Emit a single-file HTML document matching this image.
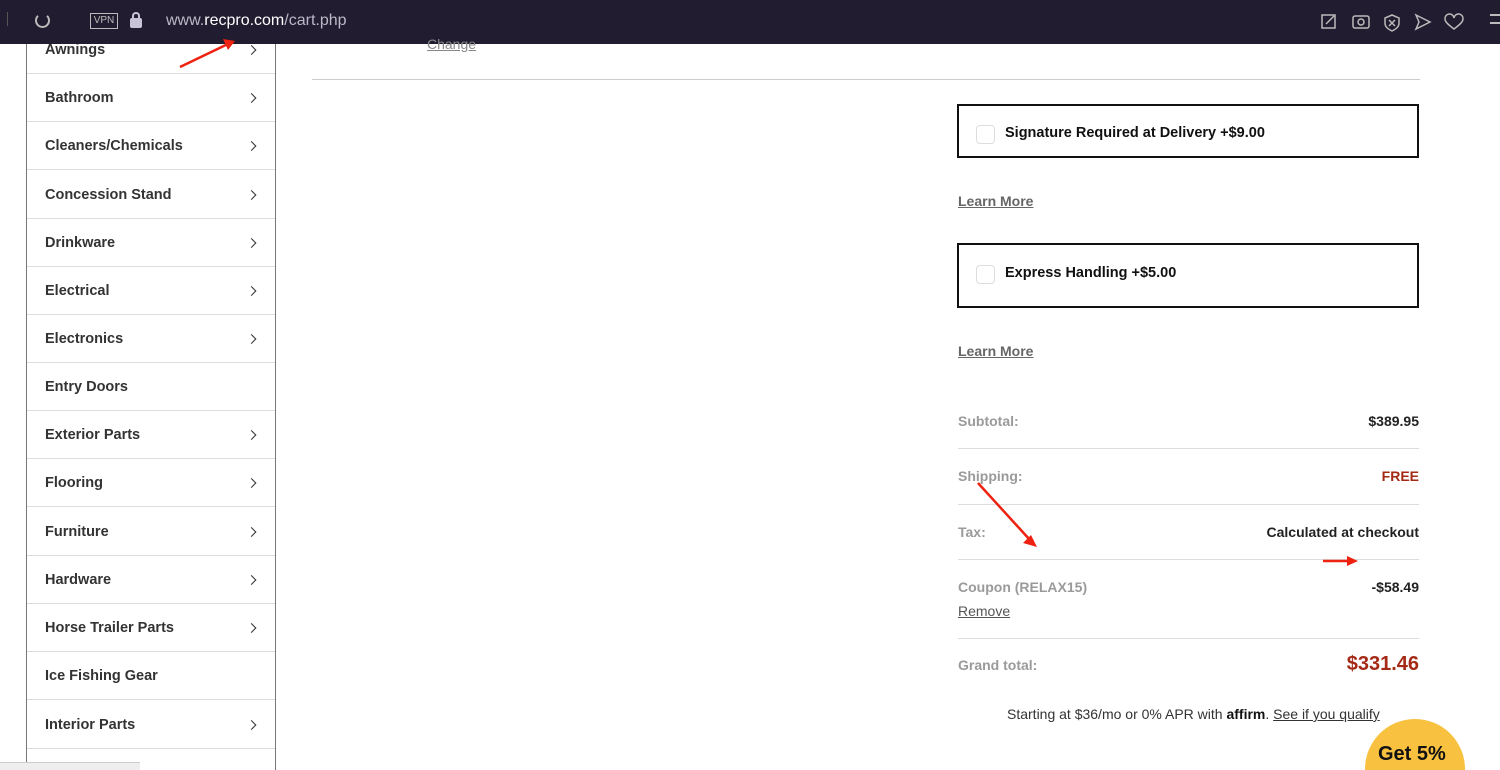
<!DOCTYPE html>
<html style="overflow:hidden;height:770px"><head><meta charset="utf-8"><style>
*{margin:0;padding:0;box-sizing:border-box}
body{width:1500px;height:770px;overflow:hidden;background:#fff;font-family:"Liberation Sans",Arial,sans-serif;position:relative}
.a{position:absolute}
.top{left:0;top:0;width:1500px;height:44px;background:#211c2f}
.side{left:26px;top:44px;width:250px;height:726px;border-left:1px solid #777;border-right:1px solid #777;overflow:hidden}
.row{position:absolute;left:0;width:248px;height:48px;border-bottom:1px solid #ddd;font-weight:bold;font-size:14.5px;color:#333;padding-left:18px}
.row span{position:absolute;top:50%;transform:translateY(-50%)}
.row i{position:absolute;right:20px;top:50%;width:7px;height:7px;border-right:1.6px solid #333;border-top:1.6px solid #333;transform:translateY(-50%) rotate(45deg);font-style:normal}
.lbl{font-weight:bold;font-size:14px;color:#9a9a9a}
.val{font-weight:bold;font-size:14px;color:#222;text-align:right;right:81px}
.hr{left:958px;width:461px;height:1px;background:#ddd}
.box{left:957px;width:462px;border:2.5px solid #111;}
.cb{position:absolute;left:17px;width:19px;height:19px;border:1px solid #ddd;border-radius:4px}
.lm{left:958px;font-weight:bold;font-size:14px;color:#666;text-decoration:underline}
</style></head><body>
<div class="a top">
<div class="a" style="left:0;top:12px;width:8px;height:14px;border-right:1.5px solid #555;"></div>
<div class="a" style="left:35px;top:13px;width:15px;height:15px;border:2px solid #bbb;border-radius:50%;border-top-color:transparent"></div>
<div class="a" style="left:90px;top:13px;width:28px;height:16px;border:1px solid #bbb;color:#bbb;font-size:10px;text-align:center;line-height:14px">VPN</div>
<div class="a" style="left:130px;top:18px;width:12px;height:10px;background:#c9c3d6;border-radius:2px"></div>
<div class="a" style="left:132px;top:12px;width:8px;height:8px;border:2px solid #c9c3d6;border-radius:4px 4px 0 0;border-bottom:none"></div>
<div class="a" style="left:166px;top:12px;font-size:16px;color:#bdb8c8">www.<span style="color:#fff">recpro.com</span>/cart.php</div>
<svg class="a" style="left:1320px;top:12px" width="160" height="20" fill="none" stroke="#bbb" stroke-width="1.5">
<rect x="2" y="3" width="13" height="13"/><path d="M6 12l8-8"/>
<rect x="33" y="4" width="16" height="12" rx="2"/><circle cx="41" cy="10" r="3"/>
<path d="M72 3l7 3v5c0 4-3 6-7 8c-4-2-7-4-7-8V6z"/><path d="M69 8l6 6M75 8l-6 6"/>
<path d="M96 3l14 7l-14 7l3-7z"/>
<path d="M134 17c-8-6-9-8-9-10a4 4 0 0 1 9-1a4 4 0 0 1 9 1c0 2-1 4-9 10z"/>
</svg>
<div class="a" style="left:1490px;top:14px;width:10px;height:2px;background:#bbb"></div>
<div class="a" style="left:1490px;top:22px;width:10px;height:2px;background:#bbb"></div>
</div>
<div class="a side">
<div class="row" style="top:-20px;height:50px"><span style="top:53%">Awnings</span><i style="top:53%"></i></div>
<div class="row" style="top:30px"><span>Bathroom</span><i></i></div>
<div class="row" style="top:78px"><span>Cleaners/Chemicals</span><i></i></div>
<div class="row" style="top:127px"><span>Concession Stand</span><i></i></div>
<div class="row" style="top:175px"><span>Drinkware</span><i></i></div>
<div class="row" style="top:223px"><span>Electrical</span><i></i></div>
<div class="row" style="top:271px"><span>Electronics</span><i></i></div>
<div class="row" style="top:319px"><span>Entry Doors</span></div>
<div class="row" style="top:367px"><span>Exterior Parts</span><i></i></div>
<div class="row" style="top:415px"><span>Flooring</span><i></i></div>
<div class="row" style="top:464px"><span>Furniture</span><i></i></div>
<div class="row" style="top:512px"><span>Hardware</span><i></i></div>
<div class="row" style="top:560px"><span>Horse Trailer Parts</span><i></i></div>
<div class="row" style="top:608px"><span>Ice Fishing Gear</span></div>
<div class="row" style="top:657px"><span>Interior Parts</span><i></i></div>
</div>
<div class="a" style="left:0;top:762px;width:140px;height:8px;background:#eee;border-top:1px solid #ccc"></div>
<div class="a" style="left:427px;top:36px;font-size:14px;color:#888;text-decoration:underline">Change</div>
<div class="a" style="left:312px;top:79px;width:1108px;height:1px;background:#ccc"></div>
<svg class="a" style="left:175px;top:36px" width="70" height="36"><path d="M5 31L55 7" stroke="#e21" stroke-width="2.5"/><path d="M48 3l12 2l-7 9z" fill="#e21"/></svg>

<div class="a box" style="top:104px;height:54px"><div class="cb" style="top:19px"></div><div class="a" style="left:46px;top:19px;font-weight:bold;font-size:14.5px;color:#111">Signature Required at Delivery +$9.00</div></div>
<div class="a lm" style="top:193px">Learn More</div>
<div class="a box" style="top:243px;height:65px"><div class="cb" style="top:20px"></div><div class="a" style="left:46px;top:20px;font-weight:bold;font-size:14.5px;color:#111">Express Handling +$5.00</div></div>
<div class="a lm" style="top:343px">Learn More</div>

<div class="a lbl" style="left:958px;top:413px">Subtotal:</div><div class="a val" style="top:413px">$389.95</div>
<div class="a hr" style="top:448px"></div>
<div class="a lbl" style="left:958px;top:468px">Shipping:</div><div class="a val" style="top:468px;color:#a52a16">FREE</div>
<div class="a hr" style="top:504px"></div>
<div class="a lbl" style="left:958px;top:524px">Tax:</div><div class="a val" style="top:524px">Calculated at checkout</div>
<div class="a hr" style="top:559px"></div>
<div class="a lbl" style="left:958px;top:579px">Coupon (RELAX15)</div><div class="a val" style="top:579px">-$58.49</div>
<div class="a" style="left:958px;top:603px;font-size:14px;color:#555;text-decoration:underline">Remove</div>
<div class="a hr" style="top:638px"></div>
<div class="a lbl" style="left:958px;top:657px">Grand total:</div><div class="a val" style="top:653px;font-size:20px;color:#a52a16">$331.46</div>
<div class="a" style="left:1007px;top:706px;font-size:14px;color:#333">Starting at $36/mo or 0% APR with <b style="color:#111">affirm</b>. <u>See if you qualify</u></div>
<svg class="a" style="left:975px;top:480px" width="70" height="70"><path d="M3 3L55 60" stroke="#e21" stroke-width="2.5"/><path d="M62 67l-14-4l8-8z" fill="#e21"/></svg>
<svg class="a" style="left:1320px;top:553px" width="40" height="16"><path d="M3 8H30" stroke="#e21" stroke-width="2.5"/><path d="M38 8l-11-5v10z" fill="#e21"/></svg>
<div class="a" style="left:1350px;top:700px;width:150px;height:70px;overflow:hidden">
<div class="a" style="left:15px;top:19px;width:100px;height:100px;border-radius:50%;background:#f8c240"></div>
<div class="a" style="left:28px;top:43px;font-weight:bold;font-size:20px;color:#111">Get 5%</div>
</div>
</body></html>
